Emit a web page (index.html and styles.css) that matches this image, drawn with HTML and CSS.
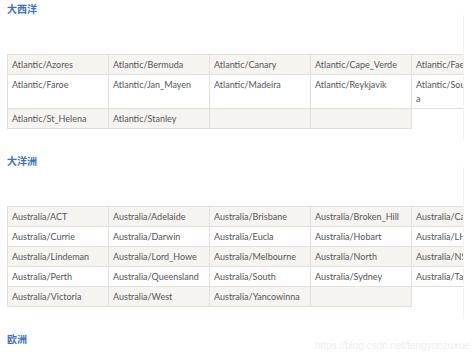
FILE: index.html
```html
<!DOCTYPE html>
<html lang="zh">
<head>
<meta charset="utf-8">
<link rel="stylesheet" href="styles.css">
</head>
<body>
<div class="page">
  <h3 class="zone">大西洋</h3>
  <div class="wrap">
    <table class="tz">
      <tr class="odd"><td>Atlantic/Azores</td><td>Atlantic/Bermuda</td><td>Atlantic/Canary</td><td>Atlantic/Cape_Verde</td><td>Atlantic/Faeroe</td></tr>
      <tr><td>Atlantic/Faroe</td><td>Atlantic/Jan_Mayen</td><td>Atlantic/Madeira</td><td>Atlantic/Reykjavik</td><td>Atlantic/South_Georgia</td></tr>
      <tr class="odd"><td>Atlantic/St_Helena</td><td>Atlantic/Stanley</td><td></td><td></td></tr>
    </table>
  </div>
  <h3 class="zone">大洋洲</h3>
  <div class="wrap">
    <table class="tz">
      <tr class="odd"><td>Australia/ACT</td><td>Australia/Adelaide</td><td>Australia/Brisbane</td><td>Australia/Broken_Hill</td><td>Australia/Canberra</td></tr>
      <tr><td>Australia/Currie</td><td>Australia/Darwin</td><td>Australia/Eucla</td><td>Australia/Hobart</td><td>Australia/LHI</td></tr>
      <tr class="odd"><td>Australia/Lindeman</td><td>Australia/Lord_Howe</td><td>Australia/Melbourne</td><td>Australia/North</td><td>Australia/NSW</td></tr>
      <tr><td>Australia/Perth</td><td>Australia/Queensland</td><td>Australia/South</td><td>Australia/Sydney</td><td>Australia/Tasmania</td></tr>
      <tr class="odd"><td>Australia/Victoria</td><td>Australia/West</td><td>Australia/Yancowinna</td><td></td></tr>
    </table>
  </div>
  <h3 class="zone">欧洲</h3>
  <div class="mark">https://blog.csdn.net/fengyuezuxue</div>
</div>
</body>
</html>
```

FILE: styles.css
```css
html, body {
  margin: 0;
  padding: 0;
  background: #fff;
}
.page {
  position: relative;
  width: 474px;
  height: 358px;
  overflow: hidden;
  padding-left: 7px;
  box-sizing: border-box;
  font-family: "Lato", "Open Sans", sans-serif;
}
.zone {
  margin: 2px 0 0 0;
  font-family: "Noto Sans CJK SC", sans-serif;
  font-size: 10px;
  line-height: 13px;
  font-weight: bold;
  color: #3b6fcf;
}
.wrap {
  width: 456px;
  overflow: hidden;
  border-right: 1px solid #f2f2f2;
  padding: 39px 0 12px 0;
  margin: 0 0 13px 0;
}
.tz {
  border-collapse: collapse;
  table-layout: fixed;
  width: 505px;
}
.tz td {
  width: 101px;
  box-sizing: border-box;
  border: 1px solid #e4e1dc;
  padding: 3px 5px 2px 4px;
  font-size: 9px;
  line-height: 14px;
  color: #555;
  vertical-align: top;
  word-break: break-all;
}
.tz tr.odd td {
  background: #f6f4f1;
}
.mark {
  position: absolute;
  left: 315px;
  top: 340px;
  font-family: "Liberation Sans", sans-serif;
  font-size: 10px;
  color: #eeeeee;
}
```
